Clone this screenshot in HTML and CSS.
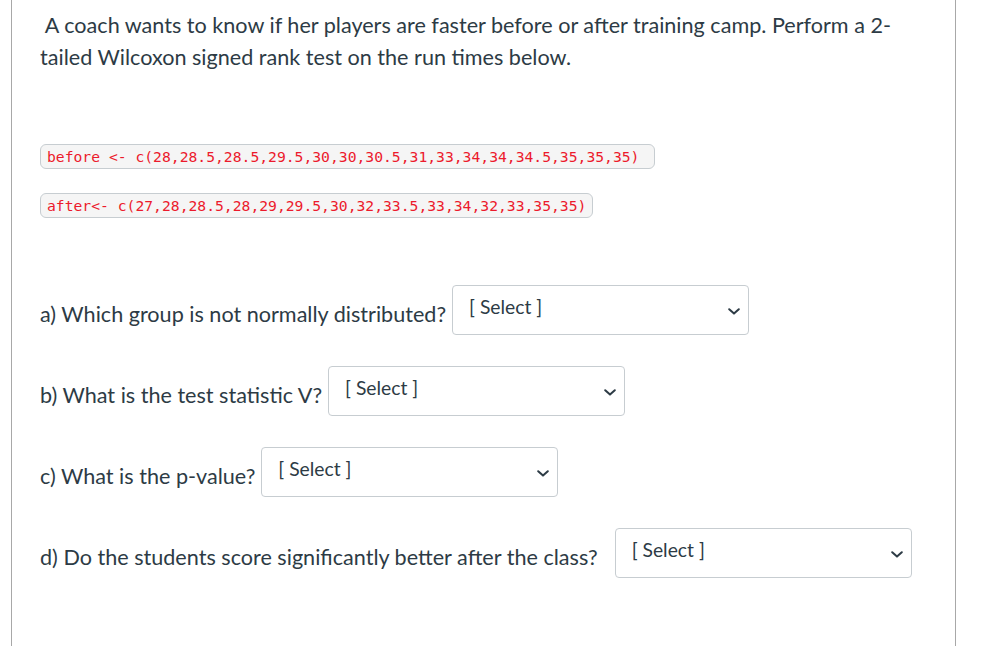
FILE: index.html
```html
<!DOCTYPE html>
<html>
<head>
<meta charset="utf-8">
<link rel="stylesheet" href="styles.css">
</head>
<body>
<div class="page">
  <p class="intro">&nbsp;A coach wants to know if her players are faster before or after training camp. Perform a 2-tailed Wilcoxon signed rank test on the run times below.</p>
  <div class="code first">before &lt;- c(28,28.5,28.5,29.5,30,30,30.5,31,33,34,34,34.5,35,35,35) </div>
  <div class="code">after&lt;- c(27,28,28.5,28,29,29.5,30,32,33.5,33,34,32,33,35,35)</div>

  <div class="row first-row">
    <span class="label">a) Which group is not normally distributed?</span>
    <div class="select"><span>[ Select ]</span><svg class="chev" viewBox="0 0 12 7" width="12" height="7"><polyline points="1.2,1.2 6,5.6 10.8,1.2"/></svg></div>
  </div>
  <div class="row">
    <span class="label">b) What is the test statistic V?</span>
    <div class="select"><span>[ Select ]</span><svg class="chev" viewBox="0 0 12 7" width="12" height="7"><polyline points="1.2,1.2 6,5.6 10.8,1.2"/></svg></div>
  </div>
  <div class="row">
    <span class="label">c) What is the p-value?</span>
    <div class="select"><span>[ Select ]</span><svg class="chev" viewBox="0 0 12 7" width="12" height="7"><polyline points="1.2,1.2 6,5.6 10.8,1.2"/></svg></div>
  </div>
  <div class="row">
    <span class="label">d) Do the students score significantly better after the class?</span>
    <div class="select wide-gap"><span>[ Select ]</span><svg class="chev" viewBox="0 0 12 7" width="12" height="7"><polyline points="1.2,1.2 6,5.6 10.8,1.2"/></svg></div>
  </div>
</div>
</body>
</html>
```

FILE: styles.css
```css
html, body {
  margin: 0;
  padding: 0;
  background: #ffffff;
}

body {
  font-family: Lato, "Liberation Sans", sans-serif;
  color: #2d3b45;
}

.page {
  margin-left: 11px;
  min-height: 646px;
  box-sizing: border-box;
  width: 945px;
  padding: 9px 28px 0 28px;
  border-left: 1px solid #a8a8a8;
  border-right: 1px solid #a8a8a8;
}

.intro {
  margin: 0;
  font-size: 21.6px;
  line-height: 32px;
}

.code {
  width: fit-content;
  margin-top: 24px;
  padding: 0 6px;
  font-family: "DejaVu Sans Mono", "Liberation Mono", monospace;
  font-size: 14.7px;
  line-height: 23px;
  white-space: pre;
  color: #ec1a2c;
  background: #f5f5f5;
  border: 1px solid #c7cdd1;
  border-radius: 6px;
}

.code.first {
  margin-top: 71px;
}

.row {
  display: flex;
  align-items: flex-start;
  margin-top: 31px;
}

.row.first-row {
  margin-top: 67px;
}

.label {
  margin-top: 16px;
  font-size: 21.6px;
  line-height: 26px;
  white-space: nowrap;
}

.select {
  position: relative;
  box-sizing: border-box;
  width: 297px;
  height: 50px;
  margin-left: 6px;
  padding: 9px 16px;
  font-size: 19.3px;
  line-height: 24px;
  color: #2d3b45;
  background: #ffffff;
  border: 1px solid #c7cdd1;
  border-radius: 4px;
}

.select.wide-gap {
  margin-left: 17px;
}

.chev {
  position: absolute;
  right: 8px;
  top: 22px;
  fill: none;
  stroke: #2d3b45;
  stroke-width: 2;
  stroke-linecap: round;
  stroke-linejoin: round;
}
```
